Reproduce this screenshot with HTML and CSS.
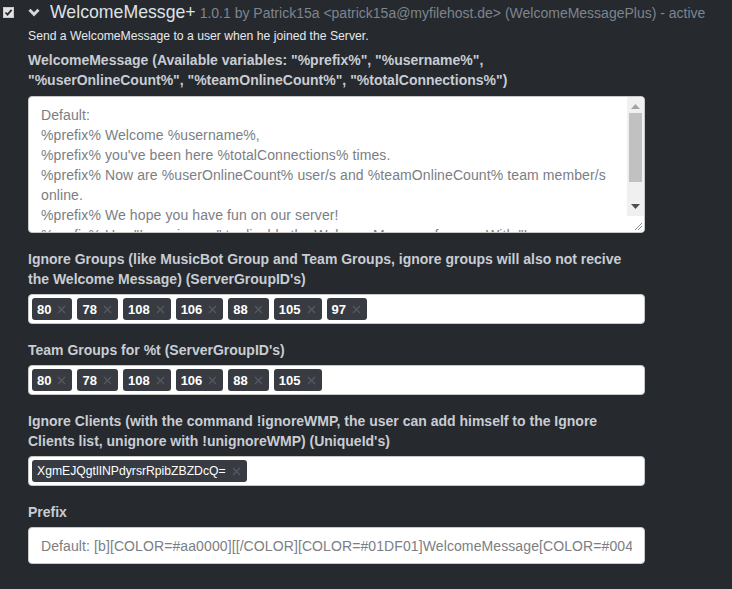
FILE: index.html
```html
<!DOCTYPE html>
<html>
<head>
<meta charset="utf-8">
<link rel="stylesheet" href="styles.css">
</head>
<body>
<div class="plugin">
  <div class="plugin-head">
    <svg class="check" width="11" height="11" viewBox="0 0 11 11"><rect x="0.5" y="0.5" width="10" height="10" fill="#e3e3e3" stroke="#c9c9c9"/><path d="M2.5 5.5 L4.5 7.6 L8.6 2.8" fill="none" stroke="#2b2b2b" stroke-width="1.8"/></svg>
    <svg class="chev" width="12" height="9" viewBox="0 0 12 9"><path d="M1.5 1.8 L6 6.3 L10.5 1.8" fill="none" stroke="#d4d8dd" stroke-width="3"/></svg>
    <span class="title">WelcomeMessge+</span>
    <span class="meta">1.0.1 by Patrick15a &lt;patrick15a@myfilehost.de&gt; (WelcomeMessagePlus) - active</span>
  </div>
  <div class="content">
    <p class="desc">Send a WelcomeMessage to a user when he joined the Server.</p>

    <div class="group">
      <label class="label label-wide">WelcomeMessage (Available variables: "%prefix%", "%username%",<br>"%userOnlineCount%", "%teamOnlineCount%", "%totalConnections%")</label>
      <div class="ta-wrap">
        <textarea class="ta" spellcheck="false">Default:
%prefix% Welcome %username%,
%prefix% you've been here %totalConnections% times.
%prefix% Now are %userOnlineCount% user/s and %teamOnlineCount% team member/s online.
%prefix% We hope you have fun on our server!
%prefix% Use "!wmp ignore" to disable the WelcomeMessage for you. With "!wmp unignore" you can enable it again.</textarea>
        <div class="sb">
          <div class="sb-track">
            <svg class="sb-up" width="9" height="5" viewBox="0 0 9 5"><path d="M0 5 L4.5 0 L9 5 Z" fill="#a3a3a3"/></svg>
            <div class="sb-thumb"></div>
            <svg class="sb-down" width="9" height="5" viewBox="0 0 9 5"><path d="M0 0 L4.5 5 L9 0 Z" fill="#505050"/></svg>
          </div>
          <div class="sb-corner">
            <svg width="8" height="8" viewBox="0 0 8 8"><path d="M1 8 L8 1 M4 8 L8 4" stroke="#8d8d8d" stroke-width="1"/></svg>
          </div>
        </div>
      </div>
    </div>

    <div class="group">
      <label class="label">Ignore Groups (like MusicBot Group and Team Groups, ignore groups will also not recive the Welcome Message) (ServerGroupID's)</label>
      <div class="tags">
        <span class="tag"><b>80</b><svg class="x" viewBox="0 0 9 9"><path d="M1 1 L8 8 M8 1 L1 8"/></svg></span>
        <span class="tag"><b>78</b><svg class="x" viewBox="0 0 9 9"><path d="M1 1 L8 8 M8 1 L1 8"/></svg></span>
        <span class="tag"><b>108</b><svg class="x" viewBox="0 0 9 9"><path d="M1 1 L8 8 M8 1 L1 8"/></svg></span>
        <span class="tag"><b>106</b><svg class="x" viewBox="0 0 9 9"><path d="M1 1 L8 8 M8 1 L1 8"/></svg></span>
        <span class="tag"><b>88</b><svg class="x" viewBox="0 0 9 9"><path d="M1 1 L8 8 M8 1 L1 8"/></svg></span>
        <span class="tag"><b>105</b><svg class="x" viewBox="0 0 9 9"><path d="M1 1 L8 8 M8 1 L1 8"/></svg></span>
        <span class="tag"><b>97</b><svg class="x" viewBox="0 0 9 9"><path d="M1 1 L8 8 M8 1 L1 8"/></svg></span>
      </div>
    </div>

    <div class="group">
      <label class="label">Team Groups for %t (ServerGroupID's)</label>
      <div class="tags">
        <span class="tag"><b>80</b><svg class="x" viewBox="0 0 9 9"><path d="M1 1 L8 8 M8 1 L1 8"/></svg></span>
        <span class="tag"><b>78</b><svg class="x" viewBox="0 0 9 9"><path d="M1 1 L8 8 M8 1 L1 8"/></svg></span>
        <span class="tag"><b>108</b><svg class="x" viewBox="0 0 9 9"><path d="M1 1 L8 8 M8 1 L1 8"/></svg></span>
        <span class="tag"><b>106</b><svg class="x" viewBox="0 0 9 9"><path d="M1 1 L8 8 M8 1 L1 8"/></svg></span>
        <span class="tag"><b>88</b><svg class="x" viewBox="0 0 9 9"><path d="M1 1 L8 8 M8 1 L1 8"/></svg></span>
        <span class="tag"><b>105</b><svg class="x" viewBox="0 0 9 9"><path d="M1 1 L8 8 M8 1 L1 8"/></svg></span>
      </div>
    </div>

    <div class="group">
      <label class="label">Ignore Clients (with the command !ignoreWMP, the user can add himself to the Ignore Clients list, unignore with !unignoreWMP) (UniqueId's)</label>
      <div class="tags">
        <span class="tag tag-id"><span>XgmEJQgtlINPdyrsrRpibZBZDcQ=</span><svg class="x" viewBox="0 0 9 9"><path d="M1 1 L8 8 M8 1 L1 8"/></svg></span>
      </div>
    </div>

    <div class="group">
      <label class="label">Prefix</label>
      <input class="input" type="text" value="Default: [b][COLOR=#aa0000][[/COLOR][COLOR=#01DF01]WelcomeMessage[COLOR=#0040FF]+[/COLOR][COLOR=#aa0000]][/COLOR][/b]" spellcheck="false">
    </div>
  </div>
</div>
</body>
</html>
```

FILE: styles.css
```css
* { box-sizing: border-box; }
html, body { margin: 0; padding: 0; }
body {
  background: #26292e;
  font-family: "Liberation Sans", Arial, sans-serif;
  width: 732px;
  height: 589px;
  overflow: hidden;
}
.plugin-head {
  display: flex;
  align-items: center;
  height: 24px;
  padding-left: 3px;
  white-space: nowrap;
}
.check { flex: none; }
.chev { flex: none; margin-left: 14px; margin-right: 10px; }
.title {
  font-size: 17.7px;
  color: #dde2e8;
  line-height: 24px;
}
.meta {
  font-size: 14px;
  color: #7d858f;
  margin-left: 4px;
  line-height: 24px;
  padding-top: 2px;
}
.content {
  padding-left: 28px;
  width: 645px;
}
.desc {
  margin: 4px 0 6px 0;
  font-size: 12.2px;
  line-height: 16px;
  color: #e6e8ea;
}
.group { margin-bottom: 16px; }
.label {
  display: block;
  font-weight: bold;
  font-size: 14px;
  line-height: 20px;
  color: #c8cdd3;
  margin-bottom: 5px;
}
.label-wide { margin-bottom: 6px; }
.ta-wrap {
  position: relative;
  height: 137px;
}
.ta {
  display: block;
  width: 100%;
  height: 137px;
  margin: 0;
  border: 1px solid #c8c8c8;
  border-radius: 4px;
  background: #fff;
  padding: 8px 30px 8px 12px;
  font-family: "Liberation Sans", Arial, sans-serif;
  font-size: 14px;
  letter-spacing: 0.1px;
  line-height: 20px;
  color: #7b7e83;
  resize: none;
  overflow: hidden;
  outline: none;
}
.sb {
  position: absolute;
  right: 1px;
  top: 1px;
  bottom: 1px;
  width: 17px;
  display: flex;
  flex-direction: column;
  border-top-right-radius: 3px;
  border-bottom-right-radius: 3px;
  overflow: hidden;
}
.sb-track {
  flex: 1;
  background: #f0f0f0;
  display: flex;
  flex-direction: column;
  align-items: center;
  padding-top: 7px;
}
.sb-up { flex: none; }
.sb-thumb {
  flex: none;
  width: 13px;
  height: 69px;
  background: #c1c1c1;
  margin-top: 4px;
}
.sb-down { flex: none; margin-top: 22px; }
.sb-corner {
  flex: none;
  height: 16px;
  background: #fff;
  display: flex;
  align-items: flex-end;
  justify-content: flex-end;
  padding: 0 2px 2px 0;
}
.tags {
  display: flex;
  align-items: center;
  gap: 5px;
  height: 30px;
  padding: 0 3px;
  background: #fff;
  border: 1px solid #c8c8c8;
  border-radius: 4px;
}
.tag {
  display: inline-flex;
  align-items: center;
  height: 22px;
  padding: 0 6px 0 5px;
  background: #383c42;
  border-radius: 3px;
  color: #ffffff;
  font-size: 13px;
}
.tag b { font-weight: bold; }
.tag-id { font-size: 12.2px; }
.x {
  width: 9px;
  height: 9px;
  margin-left: 6px;
  stroke: #575c63;
  stroke-width: 1.1;
  fill: none;
}
.input {
  display: block;
  width: 100%;
  height: 37px;
  margin: 0;
  border: 1px solid #c8c8c8;
  border-radius: 4px;
  background: #fff;
  padding: 0 12px;
  font-family: "Liberation Sans", Arial, sans-serif;
  font-size: 14px;
  letter-spacing: 0.1px;
  color: #7b7e83;
  outline: none;
}
```
